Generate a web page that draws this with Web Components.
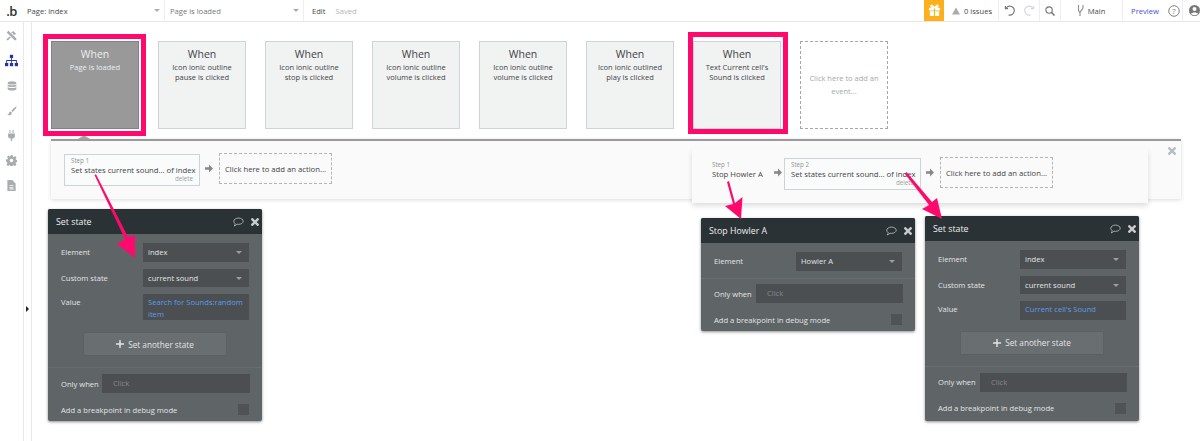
<!DOCTYPE html>
<html><head><meta charset="utf-8"><style>
html,body{margin:0;padding:0;background:#fff;font-family:"Open Sans","Liberation Sans",sans-serif}
body{width:1200px;height:441px;overflow:hidden;position:relative}
</style></head><body>
<bb-app></bb-app>
<script>
const ICONS={
 tools:'<path d="M1 3.500L3.500 1 15 12.500 15 15 12.500 15z"/><path d="M10.500 1.500l4 4-1.800 1.800-1.300-1.300-.8.8-1-1 .8-.8-1-1-.8.8-1-1 .8-.8zM5.500 9.500l1.500 1.500L3 15H1v-2z"/>',
 tree:'<rect x="6" y="1" width="4" height="4"/><rect x="0" y="11" width="4" height="4"/><rect x="6" y="11" width="4" height="4"/><rect x="12" y="11" width="4" height="4"/><path d="M7.500 5h1v2.500h6V11h-1V8.500h-5V11h-1V8.500h-5V11h-1V7.500h6z"/>',
 db:'<ellipse cx="8" cy="3" rx="7" ry="2.500"/><path d="M1 5c1.500 2.200 12.500 2.200 14 0v3c-1.500 2.200-12.500 2.200-14 0zM1 9.500c1.500 2.200 12.500 2.200 14 0V13c-1.500 2.800-12.500 2.800-14 0z"/>',
 brush:'<path d="M15.500.5c-3 1-6 4-8.500 7.500l1.500 1.500c3.500-2.500 6.500-5.500 7-9zM6 9c-2 0-3 1-3.200 3 0 1-1 1.800-2.300 2 2 1.500 6.500 1.200 7.200-2 .2-1.200-.5-2.400-1.700-3z"/>',
 plug:'<path d="M5 0h1.500v4.500H5zM9.500 0H11v4.500H9.500zM3 5h10v4c0 2-2 3.500-4 3.500V16H7v-3.500C5 12.500 3 11 3 9z"/>',
 gear:'<path fill-rule="evenodd" d="M6.500 0h3l.4 2.200 1.400.6 1.900-1.300 2.100 2.100-1.300 1.900.6 1.400 2.200.4v3l-2.200.4-.6 1.400 1.300 1.900-2.100 2.100-1.900-1.300-1.400.6-.4 2.200h-3l-.4-2.200-1.400-.6-1.900 1.300-2.100-2.100 1.300-1.900-.6-1.400L0 9.500v-3l2.200-.4.6-1.400L1.500 2.800l2.100-2.100 1.900 1.300 1.400-.6zM8 5.400a2.600 2.600 0 100 5.200 2.600 2.600 0 000-5.200z"/>',
 page:'<path fill-rule="evenodd" d="M2 0h7l5 5v11H2zM5 7.500v1.200h6V7.500zM5 10v1.200h6V10zM5 12.500v1.200h6v-1.200z"/>'
};
const svg=(n,s,c)=>`<svg width="${s}" height="${s}" viewBox="0 0 16 16" fill="${c}" style="display:block">${ICONS[n]}</svg>`;
const def=(name,render)=>customElements.define(name,class extends HTMLElement{connectedCallback(){if(!this.shadowRoot){this.attachShadow({mode:'open'}).innerHTML=render(this)}}});
const closeX='<svg width="8" height="8" viewBox="0 0 12 12" style="display:block"><path d="M2 2l8 8M10 2l-8 8" stroke="currentColor" stroke-width="3.600" stroke-linecap="square"/></svg>';
const bubble='<svg width="11" height="10" viewBox="0 0 14 12" style="display:block" fill="none" stroke="currentColor" stroke-width="1.100"><path d="M7 1c3.300 0 6 1.800 6 4s-2.700 4-6 4c-.7 0-1.300-.1-2-.2C4 10 3 10.800 1.500 11c.8-.8 1.200-1.700 1.300-2.800C1.700 7.500 1 6.300 1 5c0-2.200 2.700-4 6-4z"/></svg>';
const arrowR='<svg width="8" height="9" viewBox="0 0 8 9" style="display:block"><path d="M0 3.300h4V.5L8 4.500 4 8.500V5.700H0z" fill="#85898b"/></svg>';

def('bb-topbar',()=>`<style>
:host{display:flex;height:21px;border-bottom:1px solid #e6e8e9;background:#fff;font-size:7.600px;color:#45494c;align-items:stretch}
:host>*,div{box-sizing:border-box}
.logo{width:23px;display:flex;align-items:center;justify-content:center;font:600 13px "Open Sans",sans-serif;color:#2b3235;letter-spacing:-.5px}
.sel{display:flex;align-items:center;justify-content:space-between;border-right:1px solid #eceeef;padding:0 4px 0 4px}
.s1{width:142px}.s2{width:139px;padding-left:5px;color:#777}
.caret{width:0;height:0;border:3px solid transparent;border-top:3px solid #a9adb0;border-bottom:0;margin-right:0}
.edit{display:flex;gap:10px;align-items:center;padding-left:8px;flex:1}
.saved{color:#b3b6b8}
.gift{width:20px;background:#fbb01c;display:flex;align-items:center;justify-content:center}
.iss{width:55px;display:flex;align-items:center;gap:4px;padding-left:8px;border-right:1px solid #eceeef}
.undo{width:41px;display:flex;align-items:center;justify-content:center;gap:9px;border-right:1px solid #eceeef}
.srch{width:21px;display:flex;align-items:center;justify-content:center;border-right:1px solid #eceeef}
.main{width:62px;display:flex;align-items:center;justify-content:center;gap:4px;border-right:1px solid #eceeef;padding-right:1px}
.prev{width:42px;color:#3f4fe0;display:flex;align-items:center;justify-content:center;padding-left:2px}
.help{width:18px;display:flex;align-items:center;justify-content:center;border-right:1px solid #eceeef;padding-right:0}
.user{width:17px;display:flex;align-items:center;padding-left:6px}
</style>
<div class="logo">.b</div>
<div class="sel s1"><span>Page: index</span><i class="caret"></i></div>
<div class="sel s2"><span>Page is loaded</span><i class="caret"></i></div>
<div class="edit"><span>Edit</span><span class="saved">Saved</span></div>
<div class="gift"><svg width="13" height="13" viewBox="0 0 14 14" fill="#fff"><path d="M1 4h5.400v3H1zM7.600 4H13v3H7.600zM2 7.800h4.400V13H2zM7.600 7.800H12V13H7.600z"/><path d="M7 4C5 1 3.200 .7 3.200 2.200S5 4 7 4c2 0 3.800-.3 3.800-1.800S9 1 7 4z" fill="none" stroke="#fff" stroke-width="1.300"/></svg></div>
<div class="iss"><svg width="8" height="8" viewBox="0 0 9 8"><path d="M4.500 0L9 8H0z" fill="#a8acae"/></svg><span>0 issues</span></div>
<div class="undo"><svg width="11" height="11" viewBox="0 0 12 12" fill="none" stroke="#777" stroke-width="1.200"><path d="M1.500 1v3H4.500M2 4A4.800 4.800 0 115 10.800"/></svg><svg width="11" height="11" viewBox="0 0 12 12" fill="none" stroke="#d3d6d8" stroke-width="1.200"><path d="M10.500 1v3H7.500M10 4A4.800 4.800 0 107 10.800"/></svg></div>
<div class="srch"><svg width="10" height="10" viewBox="0 0 11 11" fill="none" stroke="#777" stroke-width="1.200"><circle cx="4.500" cy="4.500" r="3.500"/><path d="M7 7l3.500 3.500" stroke-width="1.600"/></svg></div>
<div class="main"><svg width="7" height="11" viewBox="0 0 7 11" fill="none" stroke="#8a8e90" stroke-width="1.100"><path d="M1.500 0v5c0 1.500 1.500 2 1.500 3v3M6 0v2.500C6 5 3 5 3 8"/></svg><span>Main</span></div>
<div class="prev">Preview</div>
<div class="help"><svg width="12" height="12" viewBox="0 0 13 13" fill="none" stroke="#777"><circle cx="6.500" cy="6.500" r="5.700"/><text x="6.500" y="9.500" font-size="8.500" text-anchor="middle" fill="#777" stroke="none" font-family="Open Sans">?</text></svg></div>
<div class="user"><svg width="11" height="11" viewBox="0 0 11 11"><circle cx="5.500" cy="5.500" r="5.500" fill="#777"/><circle cx="5.500" cy="4" r="2" fill="#fff"/><path d="M2 9c.5-2 6.500-2 7 0-1 1.500-6 1.500-7 0z" fill="#fff"/></svg></div>`);

def('bb-sidebar',()=>`<style>
:host{display:flex;flex-direction:column;align-items:center;width:23px;flex:none;border-right:1px solid #e6e8e9;padding-top:1px}
div{height:25px;display:flex;align-items:center;justify-content:center}
</style>${[['tools','#a9adb0',11],['tree','#2334a8',13],['db','#a9adb0',10],['brush','#a9adb0',10],['plug','#a9adb0',11],['gear','#a9adb0',11],['page','#a9adb0',11]].map(([n,c,s])=>'<div>'+svg(n,s,c)+'</div>').join('')}`);

def('bb-event',el=>{const add=el.hasAttribute('add'),act=el.hasAttribute('active');return `<style>
:host{display:block;width:88px;height:88px;box-sizing:border-box;flex:none;text-align:center;position:relative;
 background:${add?'#fff':act?'#999':'#f1f2f2'};border:${add?'1px dashed #a5a8aa':'1px solid '+(act?'#7f8587':'#cdd3d6')};color:${act?'#eceef2':'#3f4346'};font-size:7.500px;line-height:10px}
h4{margin:0;font-weight:400;font-size:10.500px;line-height:14px;padding-top:5px}
p{margin:1px 5px 0}
.a{color:#a5a8aa;padding:30px 6px 0;line-height:13px}
</style>${add?'<div class="a"><slot></slot></div>':'<h4>When</h4><p><slot></slot></p>'}`});

def('bb-step',el=>{const box=el.hasAttribute('boxed');return `<style>
:host{display:block;height:32px;margin-top:1px;width:${el.getAttribute('w')}px;box-sizing:border-box;${box?'border:1px solid #cdd3d6;background:#fafbfb;':''}padding:${box?'2px 6px':'3px 0'};color:#3f4346;position:relative;flex:none}
.n{font-size:6.200px;color:#8f9395;line-height:8px}
.t{line-height:10px;white-space:nowrap;font-size:7.700px}
.d{position:absolute;right:6px;bottom:2px;font-size:6.200px;color:#9a9ea0;line-height:8px}
</style><div class="n">Step ${el.getAttribute('n')}</div><div class="t"><slot></slot></div>${box?'<div class="d">delete</div>':''}`});

def('bb-addaction',()=>`<style>:host{display:flex;align-items:center;justify-content:center;width:113px;height:31px;box-sizing:border-box;border:1px dashed #b3b6b8;font-size:7.700px;color:#3f4346;flex:none}</style><slot></slot>`);
def('bb-row',()=>`<style>:host{display:flex;align-items:flex-start}</style><slot></slot>`);
def('bb-arrow',el=>`<style>:host{display:block;flex:none;margin:11px 6px 0 ${el.getAttribute('ml')||5}px;margin-right:${el.getAttribute('mr')||6}px}</style>${arrowR}`);

def('bb-field',el=>{const k=el.getAttribute('kind');const h=el.getAttribute('h')||18.5;return `<style>
:host{display:flex;height:${h}px;align-items:flex-start;justify-content:space-between;font-size:7.600px}
label{line-height:${k==='value'?17:19}px;color:#e3e5e6;white-space:nowrap}
.b{width:106px;height:100%;background:#4b4f52;box-sizing:border-box;padding:0 3px 0 5px;display:flex;justify-content:space-between;color:${k==='value'?'#5c9cea':'#e3e5e6'};line-height:${k==='value'?'11.500px':'19px'}}
.b span{display:block;${k==='value'?'padding-top:3px':''}}
i{width:0;height:0;border:3px solid transparent;border-top:3px solid #9a9ea0;border-bottom:0;margin-top:8px;margin-right:4px;flex:none}
</style><label>${el.getAttribute('label')}</label><div class="b"><span><slot></slot></span>${k==='value'?'':'<i></i>'}</div>`});

def('bb-only',el=>`<style>:host{display:flex;align-items:center;height:19px;justify-content:space-between;font-size:7.600px;color:#e3e5e6;white-space:nowrap}
.b{width:${el.getAttribute('w')||148}px;height:19px;background:#4b4f52;box-sizing:border-box;padding-left:11px;line-height:19px;color:#85898b}</style><span>Only when</span><div class="b">Click</div>`);
def('bb-break',()=>`<style>:host{display:flex;align-items:center;height:11px;justify-content:space-between;font-size:7.600px;color:#e3e5e6;padding-right:1px;white-space:nowrap}
b{width:11px;height:11px;background:#4f5356;display:block}</style><span>Add a breakpoint in debug mode</span><b></b>`);
def('bb-addstate',()=>`<style>:host{display:flex;align-items:center;justify-content:center;gap:4px;width:142px;height:22px;margin:0 auto;background:#696e71;color:#e3e5e6;font-size:8.200px;box-shadow:0 0 1px #555}
svg{display:block}</style><svg width="8" height="8" viewBox="0 0 9 9"><path d="M3.700 0h1.600v3.700H9v1.600H5.300V9H3.700V5.300H0V3.700h3.700z" fill="#e3e5e6"/></svg><span>Set another state</span>`);

def('bb-panel',el=>`<style>
:host{display:block;position:absolute;left:${el.getAttribute('x')}px;top:${el.getAttribute('y')}px;width:214px;height:${el.getAttribute('h')}px;background:#5f6467;border-radius:2px;box-shadow:0 1px 3px rgba(0,0,0,.45);color:#e3e5e6}
.h{height:25px;background:#2b3235;display:flex;align-items:center;padding:0 3px 0 8px;border-radius:2px 2px 0 0;font-size:8.800px;color:#eef0f0;gap:7px}
.h span{flex:1}
.c{color:#b7bbbd}.x{color:#c8cbcd}
</style><div class="h"><span>${el.getAttribute('title')}</span><div class="c">${bubble}</div><div class="x">${closeX}</div></div><slot></slot>`);
def('bb-stack',el=>`<style>:host{display:flex;flex-direction:column;padding:${el.getAttribute('p')};gap:${el.getAttribute('g')||7}px;${el.hasAttribute('line')?'border-top:1px solid #676c6f;':''}}</style><slot></slot>`);

def('bb-workflow',()=>`<style>
:host{display:block;position:relative;margin-left:19px;margin-top:10px;height:58px;background:#fafafa;border-top:2px solid #9a9a9a;box-shadow:0 1px 4px rgba(0,0,0,.15);width:1130px}
.tick{position:absolute;left:27px;top:-6px;width:0;height:0;border:6px solid transparent;border-top:0;border-bottom:4px solid #a5a5a5}
.r{padding:12px 0 0 13px}
.x{position:absolute;right:5px;top:6px;color:#b5bdc0}
</style><div class="tick"></div><div class="r"><slot></slot></div><div class="x">${closeX}</div>`);

def('bb-canvas',()=>`<style>
:host{display:block;flex:1;position:relative;height:419px;border-left:1px solid #e6e8e9;margin-left:7px}
.ev{display:flex;gap:19px;padding:19px 0 0 19px}
.tog{position:absolute;left:-6px;top:284px;width:0;height:0;border:3px solid transparent;border-left:3px solid #222;border-right:0}
</style><div class="ev"><slot name="ev"></slot></div><slot></slot>`);

def('bb-app',()=>`<style>
:host{display:block;width:1200px;height:441px;position:relative;overflow:hidden}
.m{display:flex}
.over{position:absolute;left:692px;top:149px;width:456px;height:54px;background:#fafafa;box-shadow:0 3px 5px rgba(0,0,0,.13);box-sizing:border-box;padding:8px 0 0 20px}
.pink{position:absolute;border:5px solid #ff0a6c;box-sizing:border-box}
.tog{position:absolute;left:26px;top:306px;width:0;height:0;border:3px solid transparent;border-left:3px solid #222;border-right:0}
svg.ann{position:absolute;left:0;top:0;pointer-events:none}
</style>
<bb-topbar></bb-topbar>
<div class="m"><bb-sidebar></bb-sidebar>
<bb-canvas>
 <bb-event slot="ev" active>Page is loaded</bb-event>
 <bb-event slot="ev">Icon ionic outline pause is clicked</bb-event>
 <bb-event slot="ev">Icon ionic outline stop is clicked</bb-event>
 <bb-event slot="ev">Icon ionic outline volume is clicked</bb-event>
 <bb-event slot="ev">Icon ionic outline volume is clicked</bb-event>
 <bb-event slot="ev">Icon ionic outlined play is clicked</bb-event>
 <bb-event slot="ev">Text Current cell's Sound is clicked</bb-event>
 <bb-event slot="ev" add>Click here to add an event...</bb-event>
 <bb-workflow><bb-row><bb-step boxed n="1" w="136">Set states current sound... of index</bb-step><bb-arrow></bb-arrow><bb-addaction>Click here to add an action...</bb-addaction></bb-row></bb-workflow>
</bb-canvas></div>
<div class="tog"></div>
<div class="over"><bb-row><bb-step n="1" w="57">Stop Howler A</bb-step><bb-arrow mr="2"></bb-arrow><bb-step boxed n="2" w="137">Set states current sound... of index</bb-step><bb-arrow></bb-arrow><bb-addaction>Click here to add an action...</bb-addaction></bb-row></div>
<div class="pink" style="left:43px;top:34px;width:103px;height:102px"></div>
<div class="pink" style="left:688px;top:32px;width:100px;height:102px"></div>
<bb-panel x="48" y="209" h="212" title="Set state">
 <bb-stack p="9px 13px 0 13px"><bb-field label="Element">index</bb-field><bb-field label="Custom state">current sound</bb-field><bb-field kind="value" h="26" label="Value">Search for Sounds:random item</bb-field></bb-stack>
 <div style="padding-top:13px;padding-bottom:12px"><bb-addstate></bb-addstate></div>
 <bb-stack line p="6px 12px 0 13px" g="11"><bb-only></bb-only><bb-break></bb-break></bb-stack>
</bb-panel>
<bb-panel x="701" y="218" h="113" title="Stop Howler A">
 <bb-stack p="9px 13px 7px 13px"><bb-field label="Element">Howler A</bb-field></bb-stack>
 <bb-stack line p="5.500px 12px 0 13px" g="11"><bb-only w="147"></bb-only><bb-break></bb-break></bb-stack>
</bb-panel>
<bb-panel x="925" y="216" h="205" title="Set state">
 <bb-stack p="9px 13px 0 13px"><bb-field label="Element">index</bb-field><bb-field label="Custom state">current sound</bb-field><bb-field kind="value" h="18.500" label="Value">Current cell's Sound</bb-field></bb-stack>
 <div style="padding-top:12px;padding-bottom:12px"><bb-addstate></bb-addstate></div>
 <bb-stack line p="6px 12px 0 13px" g="11"><bb-only w="147"></bb-only><bb-break></bb-break></bb-stack>
</bb-panel>
<svg class="ann" width="1200" height="441" viewBox="0 0 1200 441"><g fill="#ff0a6c">
<path d="M94.500 175L96 174.300 128 237 135 235 135 258 117 244 125 239Z"/>
<path d="M727 182L729 181 735 203 742.500 197 741 219 725 206 733 204Z"/>
<path d="M905 174L907 172.500 932 202 937 198 942 219 922 209 929 205Z"/>
</g></svg>`);
</script></body></html>
